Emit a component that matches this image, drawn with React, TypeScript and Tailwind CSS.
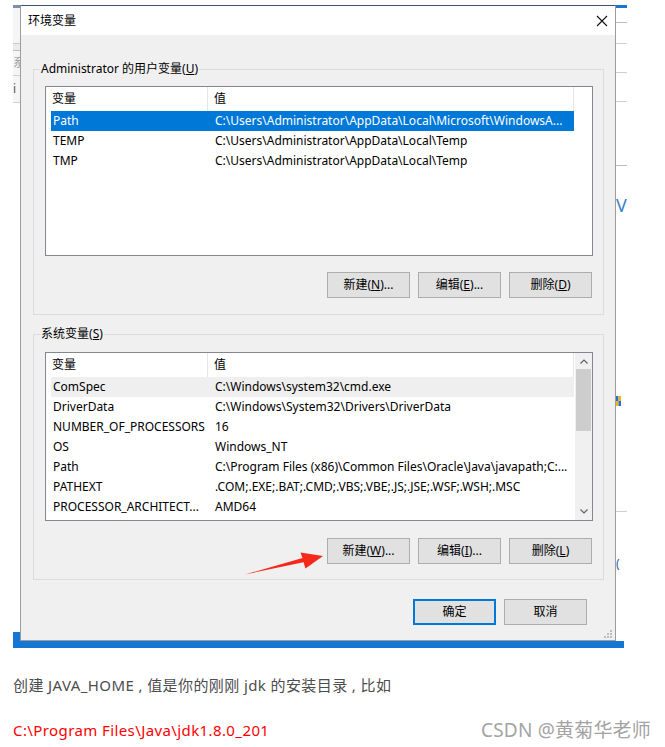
import React from "react";

const UI = "font-['Segoe_UI','Noto_Sans','Noto_Sans_CJK_SC',sans-serif]";

type Row = { name: string; value: string };

const userVars: Row[] = [
  { name: "Path", value: "C:\\Users\\Administrator\\AppData\\Local\\Microsoft\\WindowsA..." },
  { name: "TEMP", value: "C:\\Users\\Administrator\\AppData\\Local\\Temp" },
  { name: "TMP", value: "C:\\Users\\Administrator\\AppData\\Local\\Temp" },
];

const sysVars: Row[] = [
  { name: "ComSpec", value: "C:\\Windows\\system32\\cmd.exe" },
  { name: "DriverData", value: "C:\\Windows\\System32\\Drivers\\DriverData" },
  { name: "NUMBER_OF_PROCESSORS", value: "16" },
  { name: "OS", value: "Windows_NT" },
  { name: "Path", value: "C:\\Program Files (x86)\\Common Files\\Oracle\\Java\\javapath;C:..." },
  { name: "PATHEXT", value: ".COM;.EXE;.BAT;.CMD;.VBS;.VBE;.JS;.JSE;.WSF;.WSH;.MSC" },
  { name: "PROCESSOR_ARCHITECT...", value: "AMD64" },
];

const Btn = ({ label, u, tail = "", primary = false }: { label: string; u?: string; tail?: string; primary?: boolean }) => (
  <div
    className={`w-[83px] h-[26px] flex items-center justify-center bg-[#e1e1e1] text-[12px] text-black ${
      primary ? "border-2 border-[#0078d7]" : "border border-[#adadad]"
    }`}
  >
    {label}
    {u && (
      <>
        (<u>{u}</u>){tail}
      </>
    )}
  </div>
);

const VarList = ({ rows, height, selected, hover, scroll }: { rows: Row[]; height: number; selected?: number; hover?: number; scroll?: boolean }) => (
  <div className="border border-[#828790] bg-white flex" style={{ height }}>
    <div className="flex-1 flex flex-col overflow-hidden">
      <div className="h-[24px] flex items-stretch text-[12px] text-black shrink-0">
        <div className="w-[162px] border-r border-[#e5e5e5] pl-[6px] flex items-center">变量</div>
        <div className="w-[366px] border-r border-[#e5e5e5] pl-[6px] flex items-center">值</div>
      </div>
      {rows.map((r, i) => (
        <div
          key={i}
          className={`ml-[5px] w-[523px] h-[20px] flex items-center text-[12px] whitespace-nowrap shrink-0 ${
            i === selected ? "bg-[#0078d7] text-white" : i === hover ? "bg-[#efefef] text-black" : "text-black"
          }`}
        >
          <div className="w-[157px] pl-[2px] overflow-hidden">{r.name}</div>
          <div className="flex-1 pl-[7px] overflow-hidden">{r.value}</div>
        </div>
      ))}
    </div>
    {scroll && (
      <div className="w-[17px] bg-[#f0f0f0] flex flex-col items-center">
        <div className="h-[16px] flex items-center justify-center">
          <svg width="8" height="5" viewBox="0 0 8 5">
            <polyline points="0.5,4.5 4,1 7.5,4.5" fill="none" stroke="#606060" strokeWidth="1.2" />
          </svg>
        </div>
        <div className="w-[15px] h-[62px] bg-[#cdcdcd]" />
        <div className="flex-1" />
        <div className="h-[17px] flex items-center justify-center">
          <svg width="8" height="5" viewBox="0 0 8 5">
            <polyline points="0.5,0.5 4,4 7.5,0.5" fill="none" stroke="#606060" strokeWidth="1.2" />
          </svg>
        </div>
      </div>
    )}
  </div>
);

const Group = ({ title, u, className = "", children }: { title: string; u: string; className?: string; children: React.ReactNode }) => (
  <fieldset className={`w-[571px] border border-[#dcdcdc] ${className}`}>
    <legend className="ml-[6px] px-[1px] text-[12px] leading-[16px] text-black">
      {title}(<u>{u}</u>)
    </legend>
    {children}
  </fieldset>
);

const LeftStrip = () => (
  <div className="w-[7px] flex flex-col bg-[#f5f5f5]">
    <div className="h-[3px] bg-[#7d8fa6]" />
    <div className="h-[35px]" />
    <div className="h-px bg-[#c9c9c9]" />
    <div className="h-[6px] bg-[#ececec]" />
    <div className="h-px bg-[#bdbdbd]" />
    <div className="h-[24px] flex items-center text-[12px] text-[#a0a0a0] overflow-hidden leading-none">系</div>
    <div className="h-px bg-[#d0d0d0]" />
    <div className="h-[26px] flex items-center text-[12px] text-[#555] overflow-hidden leading-none">i</div>
    <div className="h-px bg-[#d0d0d0]" />
    <div className="flex-1 bg-white" />
    <div className="h-[9px] bg-[#1477d4]" />
  </div>
);

const RightStrip = () => (
  <div className="w-[8px] flex">
    <div className="w-[3px] bg-gradient-to-r from-[#bcbcbc] to-[#e6e6e6]" />
    <div className="flex-1 flex flex-col bg-white">
      <div className="h-[3px] bg-[#1477d4]" />
      <div className="h-[14px]" />
      <div className="h-px bg-[#bcbcbc]" />
      <div className="h-[20px]" />
      <div className="h-px bg-[#cfcfcf]" />
      <div className="h-[28px]" />
      <div className="h-px bg-[#cfcfcf]" />
      <div className="h-[28px]" />
      <div className="h-px bg-[#cfcfcf]" />
      <div className="h-[63px]" />
      <div className="h-px bg-[#bcbcbc]" />
      <div className="h-[30px]" />
      <div className="h-[18px] text-[#3b82d0] text-[18px] leading-none overflow-hidden">V</div>
      <div className="h-[182px]" />
      <svg width="5" height="11" viewBox="0 0 5 11">
        <rect x="0" y="0" width="2.5" height="5" fill="#2a6fd0" />
        <rect x="2.5" y="0" width="2.5" height="5" fill="#f2b517" />
        <rect x="0" y="5" width="2.5" height="5" fill="#f2b517" />
        <rect x="2.5" y="5" width="2.5" height="5" fill="#2a6fd0" />
      </svg>
      <div className="h-[104px]" />
      <div className="h-px bg-[#cfcfcf]" />
      <div className="h-[46px]" />
      <div className="h-[12px] text-[#1a5fb0] text-[12px] leading-none overflow-hidden">(</div>
      <div className="flex-1" />
    </div>
  </div>
);

const Dialog = () => (
  <div className={`w-[596px] h-[636px] border border-[#9c9c9c] border-t-[#3b5573] flex flex-col relative ${UI}`}>
    <div className="h-[29px] bg-white flex items-center justify-between pl-[7px] pr-[7px]">
      <span className="text-[12px] text-black">环境变量</span>
      <svg width="12" height="12" viewBox="0 0 12 12">
        <path d="M1 1 L11 11 M11 1 L1 11" stroke="#111" strokeWidth="1.1" />
      </svg>
    </div>
    <div className="flex-1 bg-[#f0f0f0] flex flex-col pl-[12px] pt-[26px]">
      <Group title="Administrator 的用户变量" u="U">
        <div className="pt-[9px] pl-[11px] pr-[10px] pb-[16px] flex flex-col gap-[16px]">
          <VarList rows={userVars} height={170} selected={0} />
          <div className="flex justify-end gap-2 pr-px">
            <Btn label="新建" u="N" tail="..." />
            <Btn label="编辑" u="E" tail="..." />
            <Btn label="删除" u="D" />
          </div>
        </div>
      </Group>
      <Group title="系统变量" u="S" className="mt-[11px]">
        <div className="pt-[10px] pl-[11px] pr-[10px] pb-[15px] flex flex-col gap-[17px]">
          <VarList rows={sysVars} height={169} hover={0} scroll />
          <div className="flex justify-end gap-2 pr-px">
            <Btn label="新建" u="W" tail="..." />
            <Btn label="编辑" u="I" tail="..." />
            <Btn label="删除" u="L" />
          </div>
        </div>
      </Group>
      <div className="mt-[19px] flex justify-end gap-2 pr-[28px]">
        <Btn label="确定" primary />
        <Btn label="取消" />
      </div>
      <div className="flex-1 flex items-end justify-end pr-[3px] pb-[2px]">
        <svg width="8" height="8" viewBox="0 0 8 8">
          <rect x="6" y="0" width="2" height="2" fill="#bdbdbd" />
          <rect x="3" y="3" width="2" height="2" fill="#bdbdbd" />
          <rect x="6" y="3" width="2" height="2" fill="#bdbdbd" />
          <rect x="0" y="6" width="2" height="2" fill="#bdbdbd" />
          <rect x="3" y="6" width="2" height="2" fill="#bdbdbd" />
          <rect x="6" y="6" width="2" height="2" fill="#bdbdbd" />
        </svg>
      </div>
    </div>
  </div>
);

export default function App() {
  return (
    <div className="relative min-h-screen bg-white font-['Noto_Sans','Noto_Sans_CJK_SC',sans-serif]">
      <div className="pt-[5px] pl-[13px]">
        <div className="w-[611px] h-[643px] flex flex-col">
          <div className="h-[636px] flex">
            <LeftStrip />
            <Dialog />
            <RightStrip />
          </div>
          <div className="h-[7px] bg-[#1477d4]" />
        </div>
      </div>

      <p className="mt-[27px] pl-[13px] text-[15px] leading-[20px] tracking-[0.4px] text-[#4d4d4d]">
        创建 JAVA_HOME , 值是你的刚刚 jdk 的安装目录 , 比如
      </p>
      <div className="mt-[22px] pl-[13px] pr-[14px] flex items-center justify-between h-[26px]">
        <span className="text-[15px] tracking-[0.4px] text-[#ff0000]">C:\Program Files\Java\jdk1.8.0_201</span>
        <span className="text-[19px] text-[#a3a3a3] tracking-[0.2px]">CSDN @黄菊华老师</span>
      </div>

      {/* red arrow pointing at 新建(W) */}
      <svg className="absolute left-[240px] top-[548px]" width="90" height="30" viewBox="240 548 90 30">
        <polygon
          points="245,574.5 302.5,558 300.5,552.5 323,556 305.5,568.5 303.5,562.2"
          fill="#f5281c"
        />
      </svg>
    </div>
  );
}
